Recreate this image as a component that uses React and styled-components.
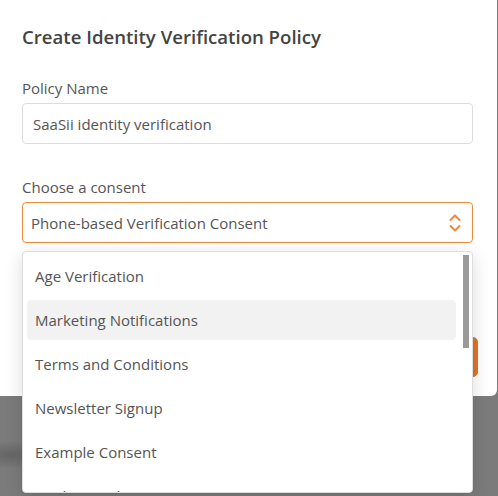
import React from "react";
import styled, { createGlobalStyle } from "styled-components";

const Global = createGlobalStyle`
  html, body { margin: 0; padding: 0; }
  body {
    background: #7b7b7b;
    font-family: "Open Sans", "Noto Sans", "Liberation Sans", sans-serif;
    overflow: hidden;
  }
`;

const Screen = styled.div`
  width: 498px;
  height: 496px;
  overflow: hidden;
  background: radial-gradient(ellipse 40px 14px at 10px 455px, rgba(60,60,60,0.35), transparent),
    #7b7b7b;
`;

const Modal = styled.div`
  width: 497px;
  height: 396px;
  box-sizing: border-box;
  background: #fff;
  border-bottom-right-radius: 6px;
  padding: 22px 19px 19px 22px;
  display: flex;
  flex-direction: column;
`;

const Title = styled.h2`
  margin: 0;
  font-size: 18.6px;
  line-height: 30px;
  font-weight: 600;
  color: #444;
`;

const Field = styled.div`
  display: flex;
  flex-direction: column;
  gap: 4px;
  margin-top: ${(p) => p.$top}px;
  margin-right: 5px;
  position: relative;
`;

const Label = styled.label`
  font-size: 15px;
  line-height: 22px;
  color: #555;
`;

const Input = styled.div`
  height: 41px;
  box-sizing: border-box;
  border: 1px solid #ddd;
  border-radius: 4px;
  padding: 0 10px;
  display: flex;
  align-items: center;
  font-size: 15px;
  color: #555;
`;

const Select = styled(Input)`
  border-color: #ef8a3c;
  padding: 0 11px 0 8px;
  justify-content: space-between;
`;

const Footer = styled.div`
  margin-top: auto;
  display: flex;
  justify-content: flex-end;
  gap: 10px;
`;

const Button = styled.button`
  height: 40px;
  padding: 0 18px;
  border-radius: 5px;
  font-family: inherit;
  font-size: 15px;
  border: 1px solid ${(p) => (p.$primary ? "#e07428" : "#ddd")};
  background: ${(p) => (p.$primary ? "#e07428" : "#fff")};
  color: ${(p) => (p.$primary ? "#fff" : "#555")};
`;

const Menu = styled.div`
  position: absolute;
  left: 0;
  right: 0;
  top: calc(100% + 8px);
  height: 242px;
  box-sizing: border-box;
  background: #fff;
  border: 1px solid #ddd;
  border-radius: 4px;
  box-shadow: 0 4px 18px rgba(0, 0, 0, 0.14);
  overflow: hidden;
`;

const List = styled.div`
  padding: 4px 16px 4px 4px;
  display: flex;
  flex-direction: column;
  gap: 4px;
`;

const Thumb = styled.div`
  position: absolute;
  top: 3px;
  right: 3px;
  width: 6px;
  height: 93px;
  background: #999;
`;

const Item = styled.div`
  flex: none;
  height: 40px;
  border-radius: 4px;
  padding: 0 8px;
  display: flex;
  align-items: center;
  font-size: 15px;
  color: #555;
  background: ${(p) => (p.$active ? "#f2f2f2" : "transparent")};
`;

const Chevrons = () => (
  <svg width="12" height="20" viewBox="0 0 12 20" fill="none" stroke="#ef8a3c" strokeWidth="2" strokeLinecap="round" strokeLinejoin="round">
    <path d="M1.5 7 L6 2.5 L10.5 7" />
    <path d="M1.5 13 L6 17.5 L10.5 13" />
  </svg>
);

const items = [
  "Age Verification",
  "Marketing Notifications",
  "Terms and Conditions",
  "Newsletter Signup",
  "Example Consent",
  "Cookies and Consent",
  "Data Processing Agreement",
  "Privacy Policy",
];

export default function App() {
  return (
    <>
      <Global />
      <Screen>
        <Modal>
          <Title>Create Identity Verification Policy</Title>
          <Field $top={25}>
            <Label>Policy Name</Label>
            <Input>SaaSii identity verification</Input>
          </Field>
          <Field $top={32}>
            <Label>Choose a consent</Label>
            <Select>
              <span>Phone-based Verification Consent</span>
              <Chevrons />
            </Select>
            <Menu>
              <List>
                {items.map((t, i) => (
                  <Item key={t} $active={i === 1}>
                    {t}
                  </Item>
                ))}
              </List>
              <Thumb />
            </Menu>
          </Field>
          <Footer>
            <Button>Cancel</Button>
            <Button $primary>Create</Button>
          </Footer>
        </Modal>
      </Screen>
    </>
  );
}
